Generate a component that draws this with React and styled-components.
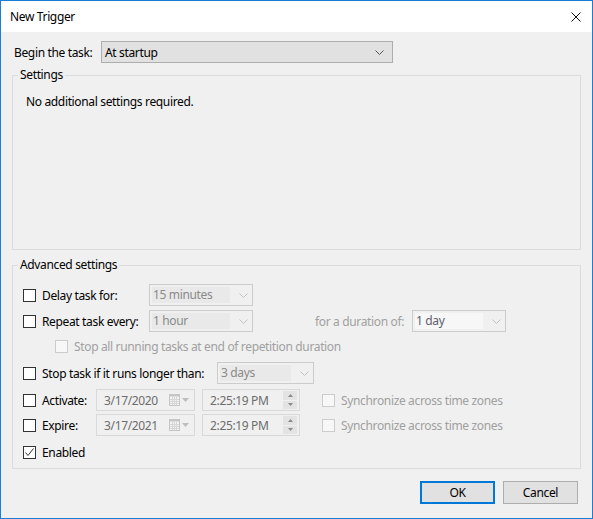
import React from 'react'
import styled, { createGlobalStyle } from 'styled-components'

const GlobalStyle = createGlobalStyle`
  body {
    margin: 0;
    background: #ffffff;
    font-family: "Noto Sans", "Open Sans", sans-serif;
    font-size: 12px;
    letter-spacing: -0.35px;
    color: #000;
  }
`

const Window = styled.div`
  width: 593px;
  height: 519px;
  box-sizing: border-box;
  border: 1px solid #1a7fd4;
  background: #f0f0f0;
  display: flex;
  flex-direction: column;
`
const TitleBar = styled.div`
  height: 31px;
  flex: none;
  background: #fff;
  display: flex;
  align-items: center;
  justify-content: space-between;
  padding-left: 9px;
`
const Title = styled.span`
  font-size: 12px;
`
const CloseButton = styled.div`
  width: 32px;
  height: 31px;
  display: flex;
  align-items: center;
  justify-content: center;
`
const Body = styled.div`
  padding: 9px 11px 0 11px;
  display: flex;
  flex-direction: column;
`
const BeginRow = styled.div`
  display: flex;
  align-items: center;
  height: 22px;
`
const BeginLabel = styled.span`
  width: 87px;
  padding-left: 2px;
`
const Select = styled.div`
  width: 292px;
  height: 22px;
  box-sizing: border-box;
  border: 1px solid #adadad;
  background: #e1e1e1;
  display: flex;
  align-items: center;
  justify-content: space-between;
  padding: 0 8px 0 3px;
`
const Group = styled.fieldset`
  margin: ${p => p.$top}px 0 0 0;
  padding: 0;
  border: 1px solid #dcdcdc;
  height: ${p => p.$height}px;
  box-sizing: border-box;
  min-width: 0;
`
const Legend = styled.legend`
  margin-left: 5px;
  padding: 0 2px;
  line-height: 16px;
  font-size: 12px;
`
const Note = styled.div`
  padding: 11px 0 0 13px;
  line-height: 16px;
`
const Rows = styled.div`
  padding: 11px 0 0 10px;
  display: flex;
  flex-direction: column;
`
const Row = styled.div`
  display: flex;
  align-items: center;
  height: 22px;
  margin-top: ${p => p.$top || 0}px;
  padding-left: ${p => p.$indent || 0}px;
`
const Box = styled.span`
  width: 13px;
  height: 13px;
  box-sizing: border-box;
  flex: none;
  border: 1px solid ${p => (p.$disabled ? '#cccccc' : '#333333')};
  background: ${p => (p.$disabled ? '#f7f7f7' : '#ffffff')};
  display: flex;
  align-items: center;
  justify-content: center;
  margin-right: 6px;
`
const Label = styled.span`
  width: ${p => (p.$width ? `${p.$width}px` : 'auto')};
  flex: none;
  color: ${p => (p.$disabled ? '#a0a0a0' : '#000')};
  margin-left: ${p => p.$left || 0}px;
  white-space: nowrap;
`
const Combo = styled.div`
  width: ${p => p.$width}px;
  height: 22px;
  box-sizing: border-box;
  border: 1px solid #cccccc;
  background: #f0f0f0;
  display: flex;
  align-items: center;
  padding: 2px;
  flex: none;
`
const ComboText = styled.span`
  flex: 1;
  height: 16px;
  line-height: 16px;
  background: ${p => p.$bg || '#e9e9e9'};
  color: ${p => p.$color || '#8a8a8a'};
  padding-left: 1px;
  margin-right: 6px;
`
const Arrow = styled.span`
  width: 14px;
  display: flex;
  justify-content: center;
`
const Field = styled.div`
  width: ${p => p.$width}px;
  height: 22px;
  box-sizing: border-box;
  border: 1px solid #d9d9d9;
  background: #f0f0f0;
  display: flex;
  align-items: center;
  padding-left: 7px;
  padding-right: 2px;
  margin-right: ${p => p.$right || 0}px;
  flex: none;
  color: #6d6d6d;
`
const FieldText = styled.span`
  flex: 1;
`
const Spinner = styled.div`
  width: 14px;
  height: 18px;
  display: flex;
  flex-direction: column;
  gap: 1px;
`
const SpinButton = styled.div`
  flex: 1;
  background: #e3e3e3;
  display: flex;
  align-items: center;
  justify-content: center;
`
const CalIcon = styled.span`
  display: flex;
  align-items: center;
  gap: 2px;
  margin-right: 3px;
`
const ButtonRow = styled.div`
  display: flex;
  justify-content: flex-end;
  gap: 8px;
  margin-top: 12px;
  padding-right: 3px;
`
const Button = styled.div`
  width: 75px;
  height: 23px;
  box-sizing: border-box;
  border: ${p => (p.$primary ? '2px solid #0078d7' : '1px solid #adadad')};
  background: #e1e1e1;
  display: flex;
  align-items: center;
  justify-content: center;
`

const Chevron = ({ color = '#555' }) => (
  <svg width="9" height="5" viewBox="0 0 9 5">
    <polyline points="0.5,0.5 4.5,4.5 8.5,0.5" fill="none" stroke={color} strokeWidth="1" />
  </svg>
)

const Check = ({ checked, disabled }) => (
  <Box $disabled={disabled}>
    {checked && (
      <svg width="11" height="11" viewBox="0 0 11 11">
        <polyline points="1.5,5.5 4,8.5 9.5,1.5" fill="none" stroke="#333" strokeWidth="1" />
      </svg>
    )}
  </Box>
)

const Calendar = () => (
  <CalIcon>
    <svg width="11" height="12" viewBox="0 0 11 12">
      <rect x="0.5" y="0.5" width="10" height="11" fill="#f4f4f4" stroke="#c6c6c6" />
      <rect x="0.5" y="0.5" width="10" height="2" fill="#c6c6c6" />
      <path d="M3.5 3v8M5.5 3v8M7.5 3v8M1 5.5h9M1 7.5h9M1 9.5h9" stroke="#d6d6d6" strokeWidth="1" />
    </svg>
    <svg width="7" height="4" viewBox="0 0 7 4">
      <polygon points="0,0 7,0 3.5,4" fill="#bdbdbd" />
    </svg>
  </CalIcon>
)

const Spin = () => (
  <Spinner>
    <SpinButton>
      <svg width="5" height="3" viewBox="0 0 5 3"><polygon points="0,3 5,3 2.5,0" fill="#8a8a8a" /></svg>
    </SpinButton>
    <SpinButton>
      <svg width="5" height="3" viewBox="0 0 5 3"><polygon points="0,0 5,0 2.5,3" fill="#8a8a8a" /></svg>
    </SpinButton>
  </Spinner>
)

const DropDown = ({ width, value, bg, color }) => (
  <Combo $width={width}>
    <ComboText $bg={bg} $color={color}>{value}</ComboText>
    <Arrow><Chevron color="#c2c2c2" /></Arrow>
  </Combo>
)

const DateTimeRow = ({ label, date, top }) => (
  <Row $top={top}>
    <Check />
    <Label $width={54}>{label}</Label>
    <Field $width={99} $right={7}>
      <FieldText>{date}</FieldText>
      <Calendar />
    </Field>
    <Field $width={98} $right={22}>
      <FieldText>2:25:19 PM</FieldText>
      <Spin />
    </Field>
    <Check disabled />
    <Label $disabled>Synchronize across time zones</Label>
  </Row>
)

export default function App() {
  return (
    <>
      <GlobalStyle />
      <Window>
        <TitleBar>
          <Title>New Trigger</Title>
          <CloseButton>
            <svg width="10" height="10" viewBox="0 0 10 10">
              <path d="M0.5 0.5L9.5 9.5M9.5 0.5L0.5 9.5" stroke="#111" strokeWidth="1" />
            </svg>
          </CloseButton>
        </TitleBar>
        <Body>
          <BeginRow>
            <BeginLabel>Begin the task:</BeginLabel>
            <Select>
              <span>At startup</span>
              <Chevron />
            </Select>
          </BeginRow>

          <Group $top={4} $height={183}>
            <Legend>Settings</Legend>
            <Note>No additional settings required.</Note>
          </Group>

          <Group $top={7} $height={212}>
            <Legend>Advanced settings</Legend>
            <Rows>
              <Row>
                <Check />
                <Label $width={107}>Delay task for:</Label>
                <DropDown width={104} value="15 minutes" />
              </Row>
              <Row $top={4}>
                <Check />
                <Label $width={107}>Repeat task every:</Label>
                <DropDown width={104} value="1 hour" />
                <Label $disabled $left={62} $width={97}>for a duration of:</Label>
                <DropDown width={94} value="1 day" bg="#f7f7f7" color="#5e5e6e" />
              </Row>
              <Row $top={3} $indent={32}>
                <Check disabled />
                <Label $disabled>Stop all running tasks at end of repetition duration</Label>
              </Row>
              <Row $top={5}>
                <Check />
                <Label $width={175}>Stop task if it runs longer than:</Label>
                <DropDown width={97} value="3 days" />
              </Row>
              <DateTimeRow label="Activate:" date="3/17/2020" top={5} />
              <DateTimeRow label="Expire:" date="3/17/2021" top={3} />
              <Row $top={5}>
                <Check checked />
                <Label>Enabled</Label>
              </Row>
            </Rows>
          </Group>

          <ButtonRow>
            <Button $primary>OK</Button>
            <Button>Cancel</Button>
          </ButtonRow>
        </Body>
      </Window>
    </>
  )
}
